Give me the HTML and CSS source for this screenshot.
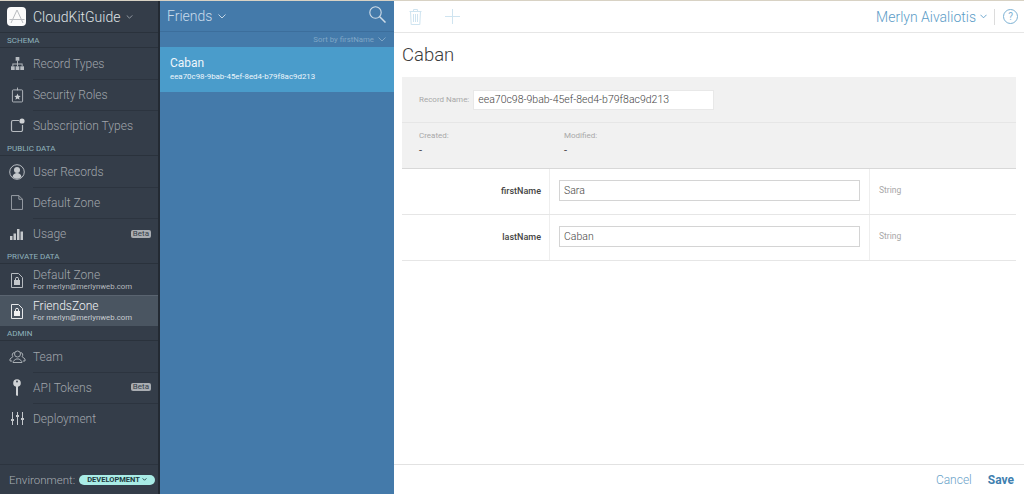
FILE: index.html
```html
<!DOCTYPE html>
<html lang="en">
<head>
<meta charset="utf-8">
<title>CloudKit Dashboard</title>
<link rel="stylesheet" href="styles.css">
</head>
<body>
<div class="app">
  <aside class="sidebar">
    <header class="brand">
      <span class="brand-logo"><svg width="18" height="18" viewBox="0 0 18 18" fill="none" stroke="#b9bcc0" stroke-width="1"><path d="M9 2 3 15M9 2l6 13M1.500 11.500h15"/></svg></span>
      <span class="brand-name">CloudKitGuide</span>
      <svg class="chev" width="7" height="4" viewBox="0 0 8 5" fill="none" stroke="#aab0b6"><path d="M.5.500 4 4 7.500.500"/></svg>
    </header>
    <div class="section">SCHEMA</div>
    <a class="item"><span class="ico"><svg width="15" height="13" viewBox="0 0 15 14" fill="#b6bbc0"><rect x="5.500" y="0" width="4" height="4"/><rect x="0.500" y="10" width="4" height="4"/><rect x="5.500" y="10" width="4" height="4"/><rect x="10.500" y="10" width="4" height="4"/><path d="M7 4h1v3h5v3h-1V8H8v2H7V8H3v2H2V7h5z"/></svg></span><span class="label">Record Types</span></a>
    <a class="item"><span class="ico"><svg width="13" height="18" viewBox="0 0 14 18" fill="none" stroke="#b6bbc0"><rect x="1.500" y="3.500" width="11" height="13" rx="1"/><path d="M7 1v3" /><path fill="#c8ccd0" stroke="none" d="m7 7.500 1 2.300 2.400.200-1.800 1.600.6 2.400L7 12.700 4.800 14l.6-2.400L3.600 10l2.400-.200z"/></svg></span><span class="label">Security Roles</span></a>
    <a class="item"><span class="ico"><svg width="15" height="15" viewBox="0 0 15 15" fill="none" stroke="#b6bbc0" stroke-width="1.200"><path d="M9 2.500H3A1.500 1.500 0 0 0 1.500 4v8A1.500 1.500 0 0 0 3 13.500h8a1.500 1.500 0 0 0 1.500-1.500V7"/><circle cx="12" cy="3" r="2.600" fill="#d0d3d6" stroke="none"/></svg></span><span class="label">Subscription Types</span></a>
    <div class="section">PUBLIC DATA</div>
    <a class="item"><span class="ico"><svg width="16" height="16" viewBox="0 0 16 16"><circle cx="8" cy="8" r="7.300" fill="none" stroke="#b6bbc0"/><circle cx="8" cy="6" r="3" fill="#c4c8cc"/><path d="M3.500 13c.5-3 2.500-4 4.500-4s4 1 4.500 4a7 7 0 0 1-9 0z" fill="#c4c8cc"/></svg></span><span class="label">User Records</span></a>
    <a class="item"><span class="ico"><svg width="12" height="15" viewBox="0 0 13 16" fill="none" stroke="#9ea4aa"><path d="M.500.500h8l4 4v11H.500zM8.500.500v4h4"/></svg></span><span class="label">Default Zone</span></a>
    <a class="item"><span class="ico"><svg width="14" height="12" viewBox="0 0 14 12" fill="#c4c8cc"><rect x="0" y="8" width="2.500" height="4"/><rect x="3.500" y="5.500" width="2.500" height="6.500"/><rect x="7" y="1" width="2.500" height="11"/><rect x="10.500" y="3.500" width="2.500" height="8.500"/></svg></span><span class="label">Usage</span><span class="beta">Beta</span></a>
    <div class="section">PRIVATE DATA</div>
    <a class="item item-sub"><span class="ico"><svg width="12" height="15" viewBox="0 0 12 15"><path d="M.500.500h7l4 4v10H.500z" fill="none" stroke="#b6bbc0"/><rect x="3" y="7" width="6" height="5" fill="#c4c8cc"/><path d="M4.500 7V5.800a1.500 1.500 0 0 1 3 0V7" fill="none" stroke="#c4c8cc"/></svg></span><span class="stack"><span class="label">Default Zone</span><span class="sub">For merlyn@merlynweb.com</span></span></a>
    <a class="item item-sub active"><span class="ico"><svg width="12" height="15" viewBox="0 0 12 15"><path d="M.500.500h7l4 4v10H.500z" fill="none" stroke="#e6e8ea"/><rect x="3" y="7" width="6" height="5" fill="#f0f1f2"/><path d="M4.500 7V5.800a1.500 1.500 0 0 1 3 0V7" fill="none" stroke="#f0f1f2"/></svg></span><span class="stack"><span class="label">FriendsZone</span><span class="sub">For merlyn@merlynweb.com</span></span></a>
    <div class="section">ADMIN</div>
    <a class="item"><span class="ico"><svg width="17" height="13" viewBox="0 0 17 13" fill="none" stroke="#b6bbc0" stroke-width=".9"><circle cx="8.500" cy="4" r="3"/><path d="M4 12.500c0-2 2-2.500 3-3.500h3c1 1 3 1.500 3 3.500zM5.500 2.500a2.300 2.300 0 0 0-1.500 4L1 9v2h2M11.500 2.500a2.300 2.300 0 0 1 1.500 4l3 2.500v2h-2"/></svg></span><span class="label">Team</span></a>
    <a class="item"><span class="ico"><svg width="8" height="17" viewBox="0 0 8 17" fill="#d0d3d6"><circle cx="4" cy="4" r="3.800"/><path d="M3 6h2v10.500L4 17l-1-1z"/><circle cx="4" cy="2.500" r=".9" fill="#343d49"/></svg></span><span class="label">API Tokens</span><span class="beta beta-up">Beta</span></a>
    <a class="item"><span class="ico"><svg width="13" height="13" viewBox="0 0 13 13" fill="#c4c8cc"><path d="M1 0h1v13H1zM6 0h1v13H6zM11 0h1v13h-1z"/><rect x="0" y="7" width="3" height="2"/><rect x="5" y="3" width="3" height="2"/><rect x="10" y="6" width="3" height="2"/></svg></span><span class="label">Deployment</span></a>
    <footer class="env">
      <span class="env-label">Environment:</span>
      <span class="env-pill">DEVELOPMENT<svg width="5" height="3" viewBox="0 0 6 4" fill="none" stroke="#1f3a40" stroke-width="1.200"><path d="M.5.500 3 3 5.500.500"/></svg></span>
    </footer>
  </aside>

  <section class="list">
    <header class="list-head">
      <span class="list-title">Friends</span>
      <svg class="chev" width="8" height="5" viewBox="0 0 8 5" fill="none" stroke="#c3d5e4"><path d="M.5.500 4 4 7.500.500"/></svg>
      <svg class="search" width="17" height="17" viewBox="0 0 17 17" fill="none" stroke="#d0dde8" stroke-width="1.100"><circle cx="6.500" cy="6.500" r="5.700"/><path d="m10.700 10.700 5.800 5.800" stroke-width="1.500"/></svg>
    </header>
    <div class="sort"><span>Sort by firstName</span><svg width="8" height="5" viewBox="0 0 8 5" fill="none" stroke="#7fa6c6"><path d="M.5.500 4 4 7.500.500"/></svg></div>
    <div class="row">
      <div class="row-title">Caban</div>
      <div class="row-sub">eea70c98-9bab-45ef-8ed4-b79f8ac9d213</div>
    </div>
  </section>

  <main class="main">
    <header class="toolbar">
      <svg width="13" height="16" viewBox="0 0 13 16" fill="none" stroke="#cfe4f0"><path d="M.5 2.500h12M4.500 2.500V.500h4v2M1.500 2.500l.7 13h8.600l.7-13M4.500 5v8M6.500 5v8M8.500 5v8"/></svg>
      <svg class="plus" width="15" height="15" viewBox="0 0 15 15" stroke="#cfe4f0" fill="none"><path d="M7.500 0v15M0 7.500h15"/></svg>
      <span class="user">Merlyn Aivaliotis</span>
      <svg class="chev" width="7" height="5" viewBox="0 0 8 5" fill="none" stroke="#5b9cc7"><path d="M.5.500 4 4 7.500.500"/></svg>
      <span class="tool-sep"></span>
      <span class="help">?</span>
    </header>
    <div class="detail">
      <h1 class="detail-title">Caban</h1>
      <div class="meta">
        <div class="meta-name">
          <span class="meta-label">Record Name:</span>
          <span class="input input-name">eea70c98-9bab-45ef-8ed4-b79f8ac9d213</span>
        </div>
        <div class="meta-dates">
          <div class="date"><span class="meta-label">Created:</span><span class="dash">-</span></div>
          <div class="date"><span class="meta-label">Modified:</span><span class="dash">-</span></div>
        </div>
      </div>
      <div class="field">
        <div class="field-name">firstName</div>
        <div class="field-value"><span class="input input-field">Sara</span></div>
        <div class="field-type">String</div>
      </div>
      <div class="field">
        <div class="field-name">lastName</div>
        <div class="field-value"><span class="input input-field">Caban</span></div>
        <div class="field-type">String</div>
      </div>
    </div>
    <footer class="actions">
      <span class="cancel">Cancel</span>
      <span class="save">Save</span>
    </footer>
  </main>
</div>
</body>
</html>
```
FILE: styles.css
```css
* { box-sizing: border-box; }
html, body { margin: 0; height: 100%; }
body { font-family: Roboto, "Liberation Sans", Arial, sans-serif; background: #fff; overflow: hidden; }
.app { display: flex; width: 1024px; height: 494px; border-top: 1px solid #d8d2c4; }

/* sidebar */
.sidebar { width: 160px; flex: none; display: flex; flex-direction: column; background: #343d49; border-right: 2px solid #232a33; }
.brand { height: 32px; flex: none; display: flex; align-items: center; padding-left: 7px; border-bottom: 1px solid #2a323c; }
.brand-logo { width: 19px; height: 19px; background: #fbfbfb; border-radius: 4px; display: flex; align-items: center; justify-content: center; }
.brand-name { margin-left: 7px; font-size: 14px; font-weight: 300; color: #dfe2e5; }
.brand .chev { margin-left: 6px; }
.section { height: 15px; flex: none; padding-left: 7px; font-size: 8px; line-height: 15px; color: #8fb3bd; border-bottom: 1px solid #2a323c; background: #343d49; }
.item { height: 31px; flex: none; display: flex; align-items: center; position: relative; }
.item + .item::before { content: ""; position: absolute; left: 33px; right: 0; top: 0; border-top: 1px solid #2c343f; }
.ico { width: 33px; flex: none; display: flex; justify-content: center; padding-left: 1px; }
.label { font-size: 12px; font-weight: 300; color: #a0a5ab; }
.beta { margin-left: auto; margin-right: 7px; background: #a9adb2; color: #343d49; border-radius: 2px; font-size: 8px; line-height: 8px; padding: 0 2px; font-weight: 400; }
.beta-up { margin-top: -2px; }
.stack { display: flex; flex-direction: column; }
.sub { font-size: 7.800px; line-height: 10px; color: #b4b9be; }
.item-sub { padding-top: 1px; }
.item-sub .label { line-height: 13px; }
.active { background: #4a5561; border-top: 1px solid #5a6470; }
.active::before { display: none; }
.active .label { color: #f2f3f4; }
.active .sub { color: #c8ccd0; }
.env { margin-top: auto; height: 30px; flex: none; display: flex; align-items: center; padding-left: 9px; border-top: 1px solid #2c343f; }
.env-label { font-size: 11.500px; font-weight: 300; color: #a9aeb4; }
.env-pill { margin-left: 4px; width: 76px; height: 10px; border-radius: 5px; background: #a9ece6; color: #1f3a40; font-size: 7.500px; font-weight: 700; line-height: 10px; display: flex; align-items: center; justify-content: center; gap: 2px; }

/* list */
.list { width: 234px; flex: none; background: #447aaa; display: flex; flex-direction: column; }
.list-head { height: 31px; flex: none; display: flex; align-items: center; padding-left: 7px; border-bottom: 1px solid #3c6e9c; }
.list-title { font-size: 14px; font-weight: 300; color: #c9dcec; }
.list-head .chev { margin-left: 6px; }
.search { margin-left: auto; margin-right: 8px; margin-top: -3px; }
.sort { height: 15px; flex: none; display: flex; align-items: center; justify-content: flex-end; gap: 4px; padding-right: 8px; font-size: 7.800px; color: #7fa6c6; }
.row { height: 45px; flex: none; background: #4a9ccb; padding: 9px 0 0 10px; color: #eef6fb; }
.row-title { font-size: 12px; line-height: 14px; font-weight: 400; }
.row-sub { font-size: 7.900px; line-height: 13px; }

/* main */
.main { flex: 1; min-width: 0; display: flex; flex-direction: column; }
.toolbar { height: 32px; flex: none; display: flex; align-items: center; padding-left: 15px; border-bottom: 1px solid #e6e6e6; }
.plus { margin-left: 23px; }
.user { margin-left: auto; font-size: 14px; font-weight: 300; color: #5b9cc7; }
.toolbar .chev { margin-left: 4px; }
.tool-sep { width: 1px; height: 16px; background: #dcdcdc; margin: 0 8px 0 7px; }
.help { width: 15px; height: 15px; margin-right: 6px; border: 1px solid #7db2d4; border-radius: 50%; color: #7db2d4; font-size: 10px; line-height: 13px; text-align: center; }
.detail { flex: 1; padding: 0 8px; }
.detail-title { margin: 0; height: 44px; padding-top: 11px; font-size: 18.500px; line-height: 22px; font-weight: 300; color: #3c3c3c; }
.meta { background: #f1f1f1; border-bottom: 1px solid #d8d8d8; }
.meta-name { height: 46px; display: flex; align-items: center; padding-left: 17px; border-bottom: 1px solid #e6e6e6; }
.meta-label { font-size: 8px; color: #a8a8a8; }
.input { display: block; background: #fff; color: #444; border: 1px solid #e8e8e8; font-size: 10px; font-weight: 300; }
.input-name { margin-left: 4px; width: 241px; height: 20px; line-height: 18px; padding-left: 4px; font-size: 10.500px; }
.meta-dates { height: 45px; display: flex; padding-left: 17px; }
.date { width: 145px; display: flex; flex-direction: column; padding-top: 8px; }
.dash { font-size: 11px; line-height: 21px; color: #444; }
.field { height: 46px; display: flex; align-items: stretch; border-bottom: 1px solid #e6e6e6; }
.field-name { width: 148px; flex: none; border-right: 1px solid #eee; padding-right: 8px; text-align: right; font-size: 9px; font-weight: 500; line-height: 44px; color: #444; }
.field-value { width: 320px; flex: none; border-right: 1px solid #eee; padding: 11px 9px 0; }
.input-field { height: 21px; line-height: 19px; padding-left: 4px; font-size: 10.500px; border-color: #d4d4d4; }
.field-type { padding: 0 0 0 9px; font-size: 8.500px; line-height: 43px; color: #a8a8a8; }
.actions { height: 30px; flex: none; display: flex; align-items: center; justify-content: flex-end; gap: 16px; padding-right: 10px; border-top: 1px solid #e2e2e2; font-size: 12px; }
.cancel { font-weight: 300; color: #6aa3c9; }
.save { font-weight: 700; color: #3f7faf; }
```
